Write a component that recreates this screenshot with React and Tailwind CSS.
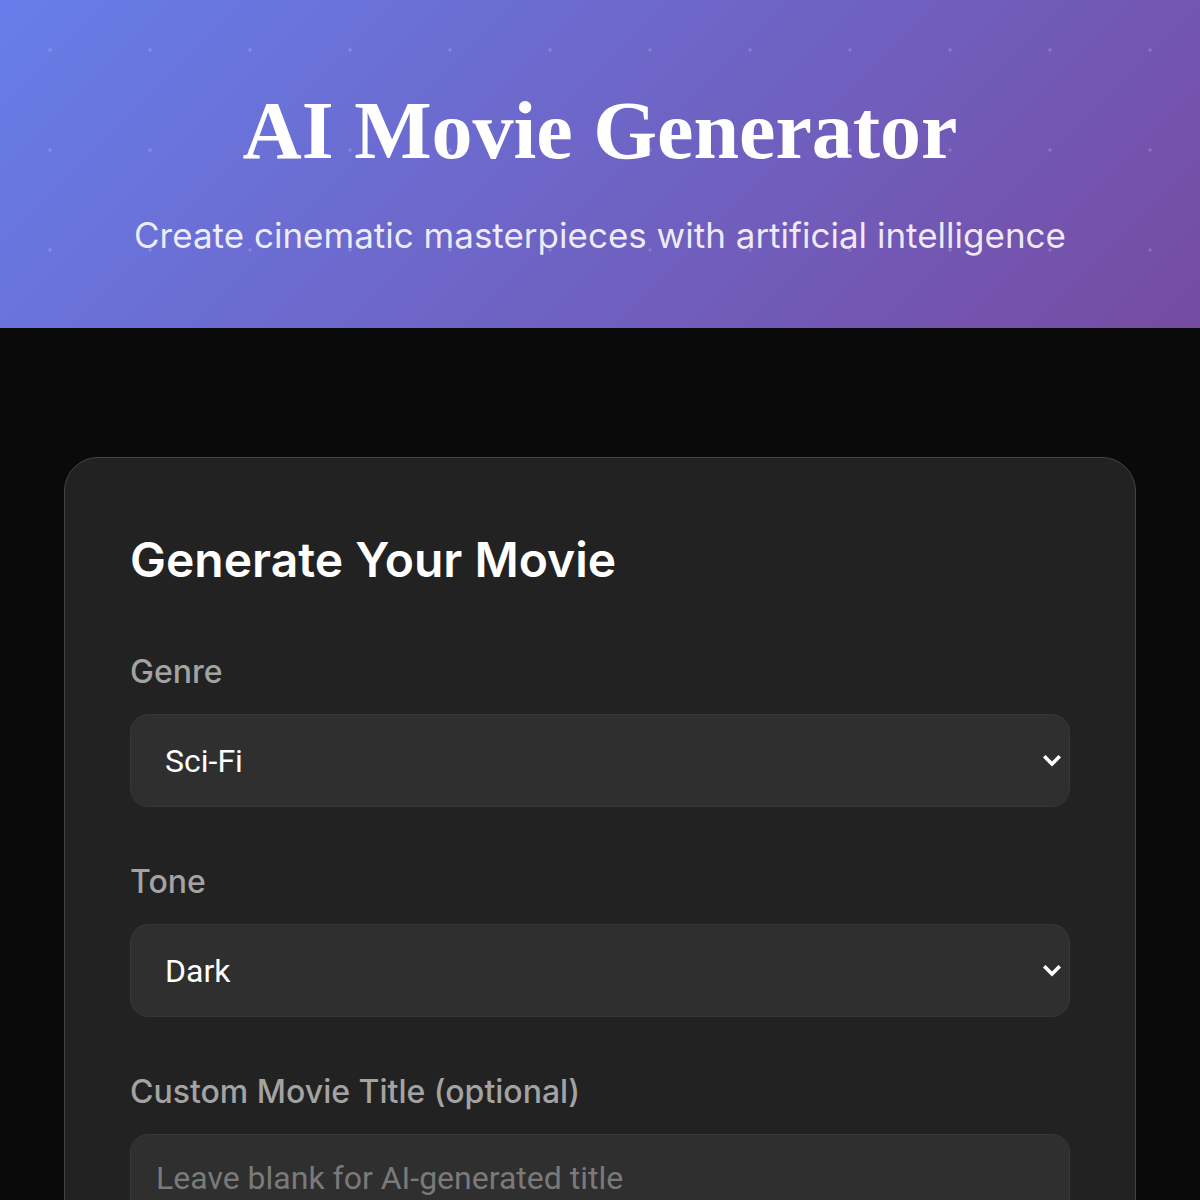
import React from "react";

function Chevron() {
  return (
    <svg
      width="18"
      height="12"
      viewBox="0 0 18 12"
      className="pointer-events-none absolute right-[9px] top-1/2 -translate-y-1/2"
      fill="none"
    >
      <polyline points="2.5,2.5 9,9 15.5,2.5" stroke="#ffffff" strokeWidth="3.6" strokeLinejoin="miter" strokeLinecap="square" />
    </svg>
  );
}

function SelectField({ label, value, options }) {
  return (
    <div className="mb-[52px] flex flex-col">
      <label className="mb-[20px] text-[32px] font-medium leading-[45px] text-[#a3a3a3] [font-family:Inter,'Noto_Sans',sans-serif]">
        {label}
      </label>
      <div className="relative">
        <select
          defaultValue={value}
          className="h-[93px] w-full appearance-none rounded-[18px] border border-[#373737] bg-[#2f2f2f] pl-[34px] pr-[60px] text-[32px] text-white outline-none [font-family:Roboto,'Liberation_Sans',sans-serif]"
        >
          {options.map((o) => (
            <option key={o}>{o}</option>
          ))}
        </select>
        <Chevron />
      </div>
    </div>
  );
}

export default function App() {
  return (
    <div className="min-h-[1200px] bg-[#0a0a0a]">
      <header className="relative h-[328px] overflow-hidden bg-[linear-gradient(135deg,#667eea_0%,#764ba2_100%)] text-center">
        <div className="absolute inset-0 bg-[radial-gradient(circle,rgba(255,255,255,0.14)_1.6px,transparent_2px)] bg-[length:100px_100px]" />
        <div className="relative flex flex-col items-center pt-[82px]">
          <h1 className="text-[82px] font-bold leading-[98px] text-white [font-family:'Liberation_Serif','Times_New_Roman',serif]">
            AI Movie Generator
          </h1>
          <p className="mt-[31px] text-[35px] font-normal leading-[48px] text-[rgba(255,255,255,0.88)] [font-family:Inter,'Noto_Sans',sans-serif]">
            Create cinematic masterpieces with artificial intelligence
          </p>
        </div>
      </header>

      <main className="px-[64px] pt-[129px] pb-[64px]">
        <section className="rounded-[34px] border border-[#444444] bg-[#222222] px-[65px] pt-[73px] pb-[64px]">
          <h2 className="mb-[60px] text-[48px] font-semibold leading-[58px] text-white [font-family:Inter,'Noto_Sans',sans-serif]">
            Generate Your Movie
          </h2>

          <SelectField
            label="Genre"
            value="Sci-Fi"
            options={["Action", "Comedy", "Drama", "Horror", "Sci-Fi", "Thriller", "Romance"]}
          />
          <SelectField
            label="Tone"
            value="Dark"
            options={["Dark", "Light", "Epic", "Mysterious", "Whimsical"]}
          />

          <div className="mb-[52px] flex flex-col">
            <label className="mb-[20px] text-[32px] font-medium leading-[45px] text-[#a3a3a3] [font-family:Inter,'Noto_Sans',sans-serif]">
              Custom Movie Title (optional)
            </label>
            <input
              type="text"
              placeholder="Leave blank for AI-generated title"
              className="h-[93px] w-full rounded-[18px] border border-[#373737] bg-[#2f2f2f] px-[25px] pb-[6px] text-[32px] text-white outline-none placeholder:text-[#7a7a7a] [font-family:Roboto,'Liberation_Sans',sans-serif]"
            />
          </div>

          <button className="h-[93px] w-full rounded-[18px] bg-[linear-gradient(135deg,#667eea_0%,#764ba2_100%)] text-[32px] font-semibold text-white [font-family:Inter,'Noto_Sans',sans-serif]">
            Generate Movie
          </button>
        </section>
      </main>
    </div>
  );
}
